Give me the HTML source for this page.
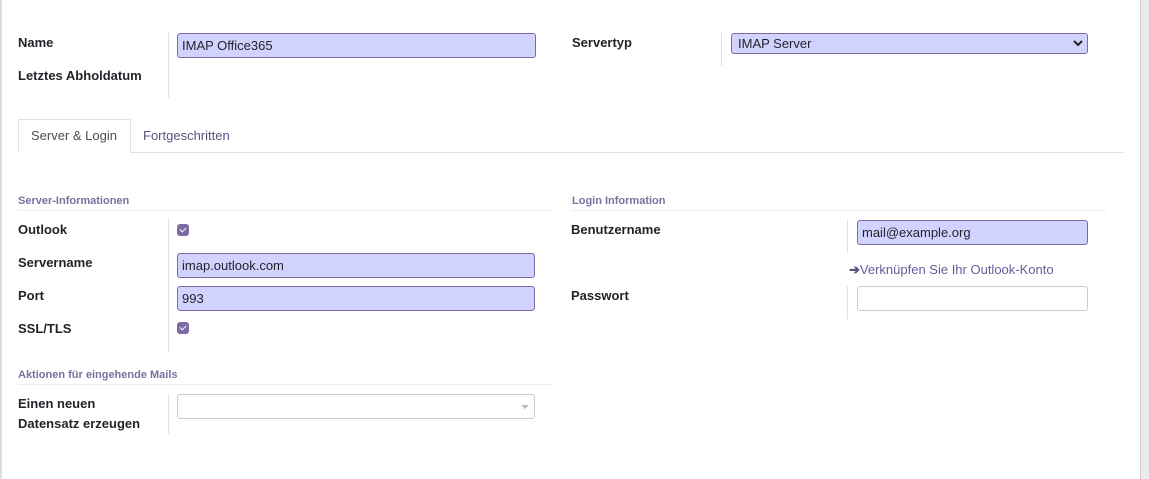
<!DOCTYPE html>
<html><head><meta charset="utf-8"><style>
*{box-sizing:border-box;margin:0;padding:0}
body{width:1149px;height:479px;position:relative;background:#fff;font-family:"Liberation Sans",sans-serif;font-size:13px;color:#212529;overflow:hidden}
.a{position:absolute;white-space:nowrap}
.l{font-weight:bold;color:#212529}
.sep{position:absolute;width:1px;background:#dee2e6}
.in{position:absolute;height:25px;background:#d2d2ff;border:1px solid #7c6ba5;border-radius:3px;padding:3px 4px;line-height:17px;color:#212529}
.wh{background:#fff;border-color:#ccc}
.h{font-size:11px;font-weight:bold;color:#7c6f9f}
.hl{position:absolute;height:1px;background:#eceef0}
.cb{position:absolute;width:12px;height:12px;background:#7c6ba5;border-radius:3px}
.cb:after{content:"";position:absolute;left:3px;top:3px;width:5px;height:3px;border-left:1.5px solid #fff;border-bottom:1.5px solid #fff;transform:rotate(-45deg)}
</style></head><body>
<div class="a" style="left:0;top:0;width:2px;height:479px;background:#ddd"></div>
<div class="a" style="left:1140px;top:0;width:9px;height:479px;background:#ebebeb;border-left:1px solid #ccc"></div>

<div class="a l" style="left:18px;top:35px">Name</div>
<div class="a l" style="left:18px;top:68px">Letztes Abholdatum</div>
<div class="sep" style="left:168px;top:33px;height:65px"></div>
<div class="in" style="left:177px;top:33px;width:359px">IMAP Office365</div>

<div class="a l" style="left:572px;top:35px">Servertyp</div>
<div class="sep" style="left:721px;top:33px;height:33px"></div>
<div class="in" style="left:731px;top:33px;width:357px;height:21px;padding:1px 6px;line-height:17px">IMAP Server
<svg style="position:absolute;right:4px;top:5px" width="10" height="8" viewBox="0 0 10 8"><path d="M1 2l4 4 4-4" stroke="#222" stroke-width="2" fill="none"/></svg></div>

<div class="a" style="left:18px;top:119px;width:113px;height:34px;border:1px solid #dee2e6;border-bottom:none;background:#fff;z-index:2"></div>
<div class="a" style="left:31px;top:128px;color:#495057;z-index:3">Server &amp; Login</div>
<div class="a" style="left:143px;top:128px;color:#5d5180">Fortgeschritten</div>
<div class="hl" style="left:18px;top:152px;width:1106px;background:#dee2e6"></div>

<div class="a h" style="left:18px;top:195px">Server-Informationen</div>
<div class="hl" style="left:18px;top:210px;width:535px"></div>
<div class="a h" style="left:572px;top:195px">Login Information</div>
<div class="hl" style="left:571px;top:210px;width:536px"></div>

<div class="sep" style="left:168px;top:218px;height:134px"></div>
<div class="a l" style="left:18px;top:222px">Outlook</div>
<div class="cb" style="left:177px;top:224px"></div>
<div class="a l" style="left:18px;top:255px">Servername</div>
<div class="in" style="left:177px;top:253px;width:358px">imap.outlook.com</div>
<div class="a l" style="left:18px;top:288px">Port</div>
<div class="in" style="left:177px;top:286px;width:358px">993</div>
<div class="a l" style="left:18px;top:321px">SSL/TLS</div>
<div class="cb" style="left:177px;top:322px"></div>

<div class="a h" style="left:18px;top:369px">Aktionen für eingehende Mails</div>
<div class="hl" style="left:18px;top:384px;width:535px"></div>
<div class="a l" style="left:18px;top:396px">Einen neuen</div>
<div class="a l" style="left:18px;top:416px">Datensatz erzeugen</div>
<div class="sep" style="left:168px;top:394px;height:40px"></div>
<div class="in wh" style="left:177px;top:394px;width:358px"><div style="position:absolute;right:5px;top:10px;border-left:4px solid transparent;border-right:4px solid transparent;border-top:4px solid #bbb"></div></div>

<div class="a l" style="left:571px;top:222px">Benutzername</div>
<div class="sep" style="left:847px;top:220px;height:33px"></div>
<div class="in" style="left:857px;top:220px;width:231px">mail@example.org</div>
<div class="a" style="left:849px;top:262px;color:#6c5a98"><span style="color:#5d5180;font-weight:bold">➔</span>Verknüpfen Sie Ihr Outlook-Konto</div>
<div class="a l" style="left:571px;top:288px">Passwort</div>
<div class="sep" style="left:847px;top:286px;height:33px"></div>
<div class="in wh" style="left:857px;top:286px;width:231px"></div>
</body></html>
